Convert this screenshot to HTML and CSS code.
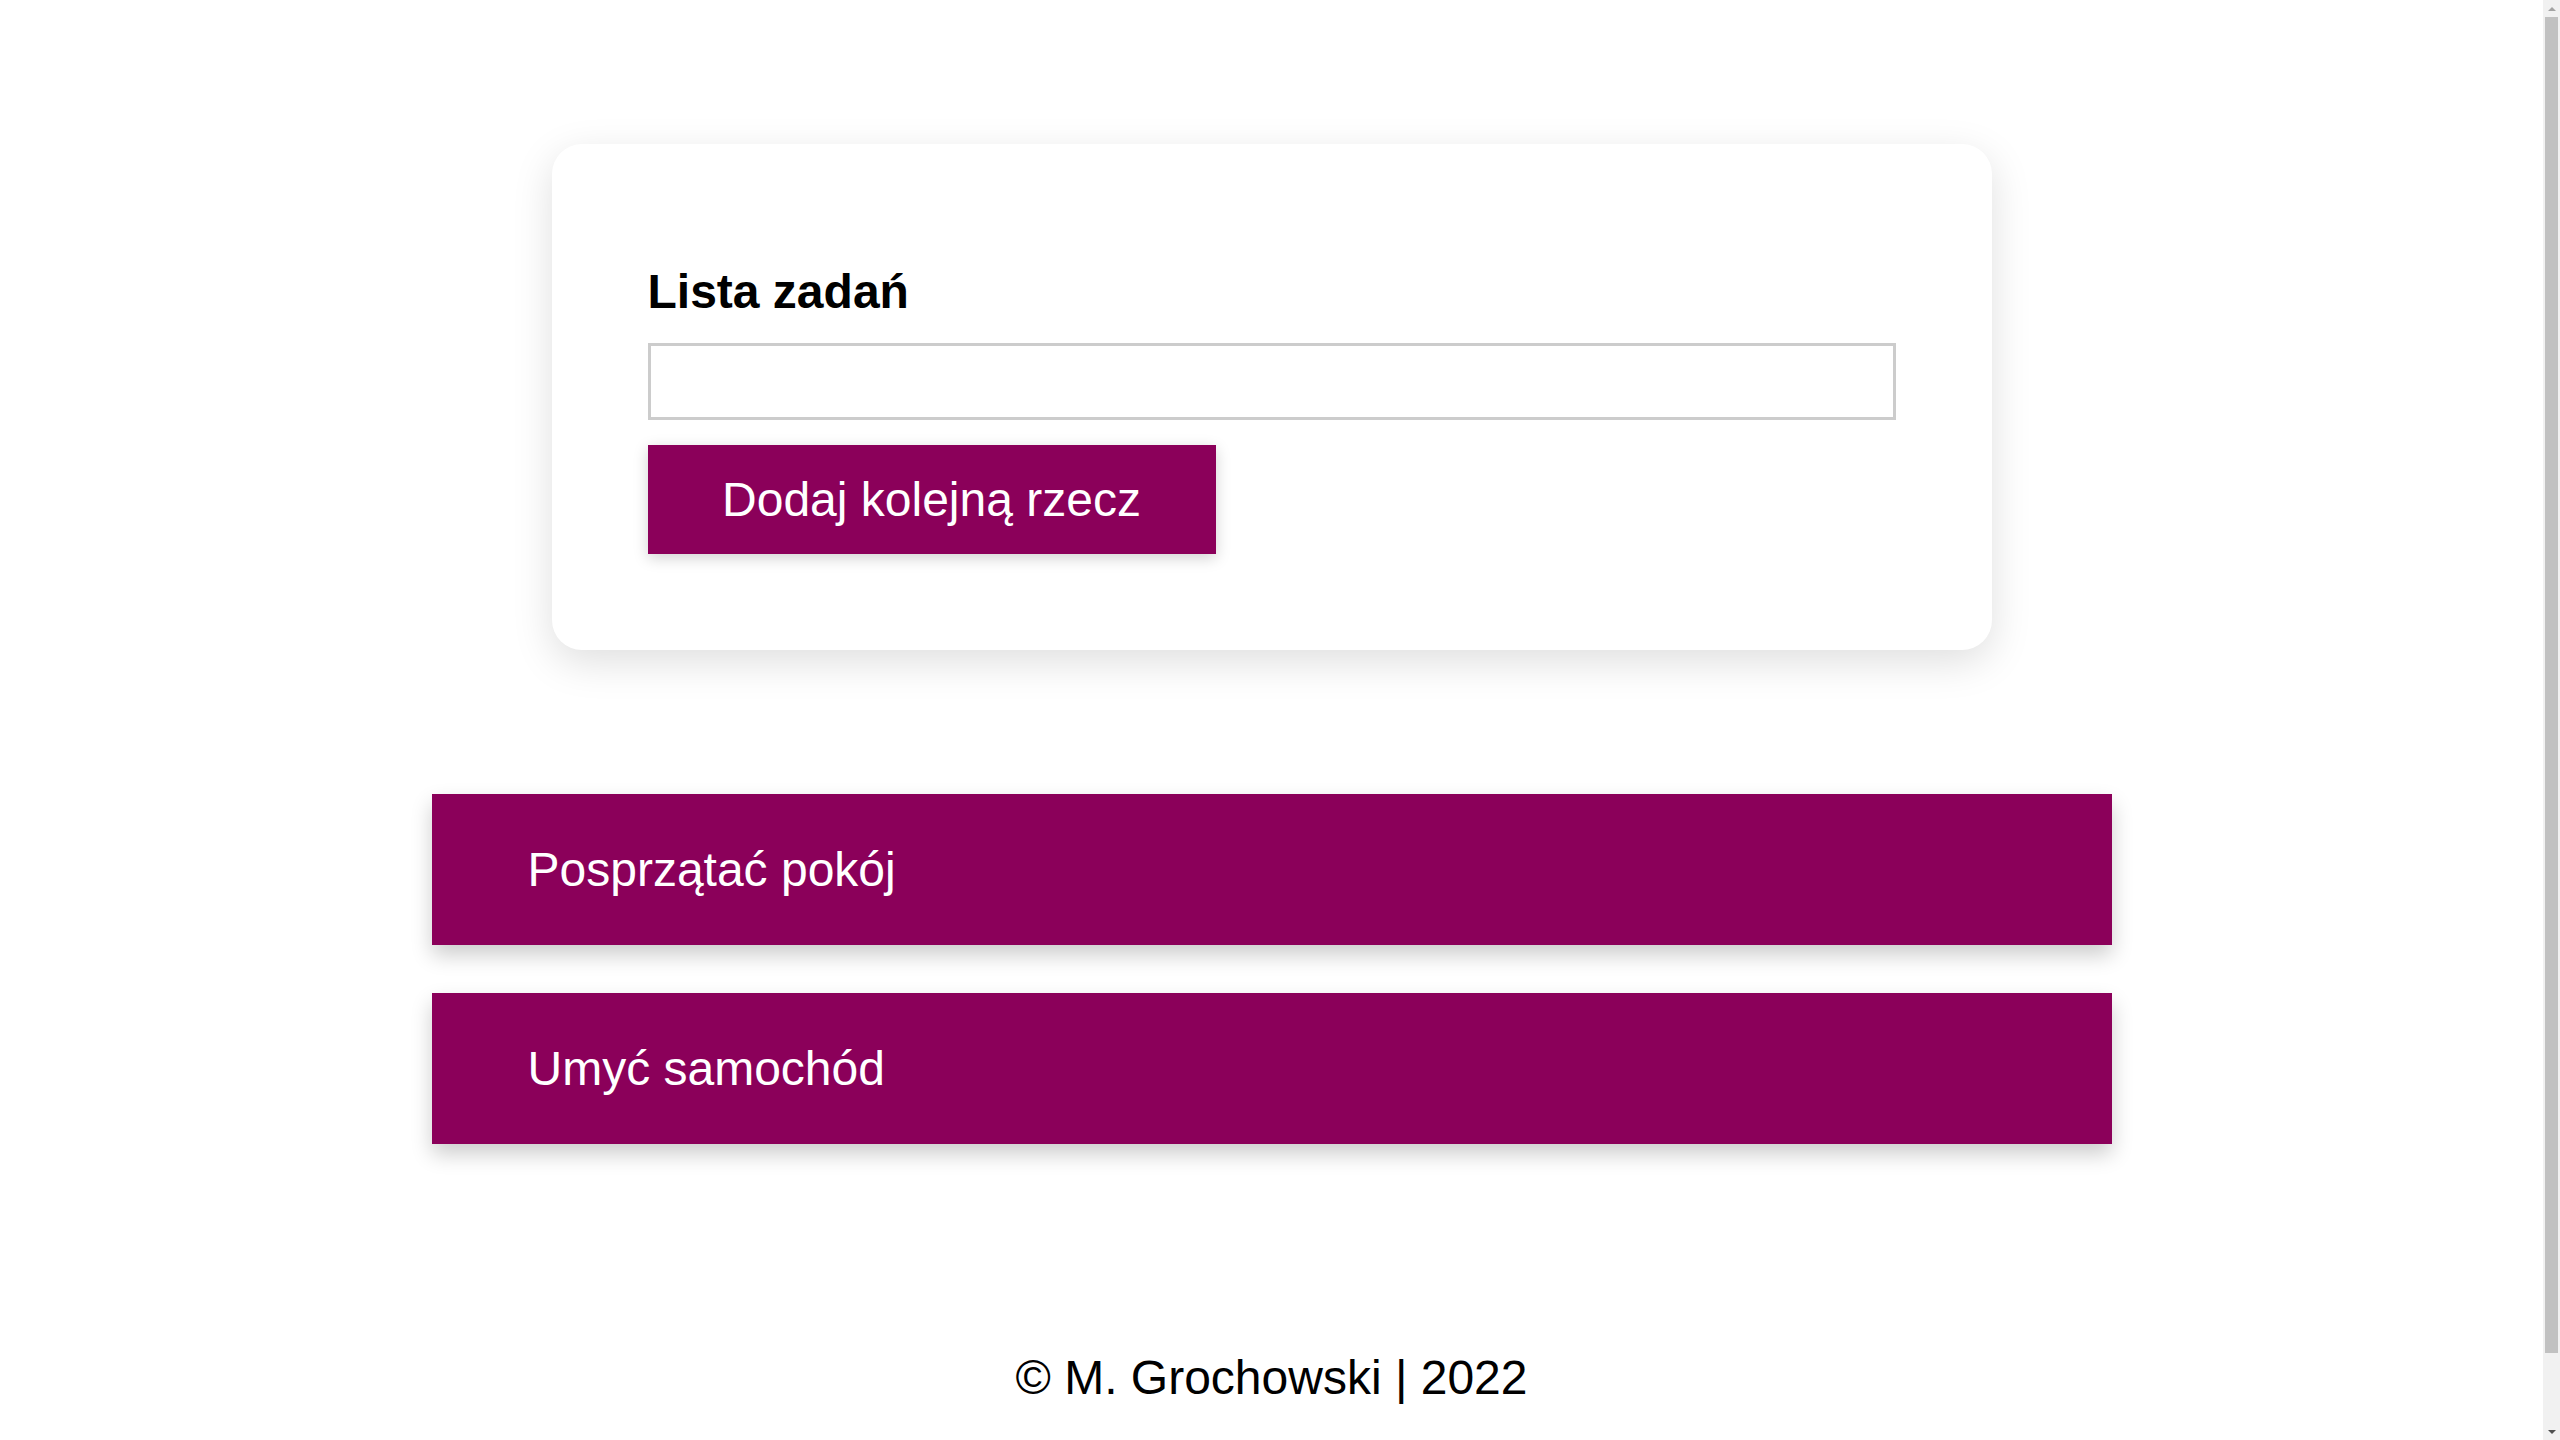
FILE: index.html
```html
<!DOCTYPE html>
<html lang="pl">
<head>
<meta charset="utf-8">
<title>Lista zadań</title>
<link rel="stylesheet" href="styles.css">
</head>
<body>
<div class="viewport">
  <main class="page">
    <section class="card">
      <h1 class="card-title">Lista zadań</h1>
      <input class="task-input" type="text">
      <button class="add-btn" type="button">Dodaj kolejną rzecz</button>
    </section>
    <ul class="tasks">
      <li class="task">Posprzątać pokój</li>
      <li class="task">Umyć samochód</li>
    </ul>
  </main>
  <footer class="footer">© M. Grochowski | 2022</footer>
</div>
<div class="scrollbar" aria-hidden="true">
  <span class="sb-arrow sb-up"></span>
  <span class="sb-track"><span class="sb-thumb"></span></span>
  <span class="sb-arrow sb-down"></span>
</div>
</body>
</html>
```
FILE: styles.css
```css
html, body {
  margin: 0;
  padding: 0;
  background: #ffffff;
  font-family: "Liberation Sans", Arial, sans-serif;
  color: #000;
}

.viewport {
  width: calc(100% - 17px);
}

.page {
  display: flex;
  flex-direction: column;
  align-items: center;
  padding-top: 144px;
}

.card {
  box-sizing: border-box;
  width: 1440px;
  padding: 96px;
  background: #fff;
  border-radius: 30px;
  box-shadow: 0 12px 40px rgba(0, 0, 0, 0.13);
  display: flex;
  flex-direction: column;
  align-items: flex-start;
}

.card-title {
  font-size: 48px;
  font-weight: bold;
  line-height: 55px;
  margin: 24px 0 24px;
}

.task-input {
  box-sizing: border-box;
  width: 100%;
  height: 77px;
  border: 3px solid #cccccc;
  border-radius: 0;
  padding: 0 16px;
  font-size: 32px;
  font-family: inherit;
  margin: 0;
  outline: none;
}

.add-btn {
  margin-top: 25px;
  box-sizing: border-box;
  width: 568px;
  height: 109px;
  border: none;
  background: #8b005a;
  color: #fff;
  font-family: "Liberation Sans", Arial, sans-serif;
  font-size: 48px;
  box-shadow: 0 4px 14px rgba(0, 0, 0, 0.18);
  cursor: pointer;
}

.tasks {
  list-style: none;
  margin: 144px 0 0;
  padding: 0;
  display: flex;
  flex-direction: column;
  gap: 48px;
}

.task {
  box-sizing: border-box;
  width: 1680px;
  padding: 48px 96px;
  background: #8b005a;
  color: #fff;
  font-size: 48px;
  line-height: 55px;
  box-shadow: 0 10px 20px rgba(0, 0, 0, 0.2);
}

.footer {
  text-align: center;
  font-size: 48px;
  line-height: 55px;
  margin-top: 206px;
  padding-bottom: 110px;
}

/* fake browser scrollbar */
.scrollbar {
  position: fixed;
  top: 0;
  right: 0;
  width: 17px;
  height: 100vh;
  background: #f1f1f1;
  display: flex;
  flex-direction: column;
  align-items: center;
}

.sb-arrow {
  flex: 0 0 17px;
  width: 17px;
  display: flex;
  align-items: center;
  justify-content: center;
}

.sb-up::before {
  content: "";
  border-left: 4px solid transparent;
  border-right: 4px solid transparent;
  border-bottom: 4px solid #a3a3a3;
}

.sb-down::before {
  content: "";
  border-left: 4px solid transparent;
  border-right: 4px solid transparent;
  border-top: 4px solid #505050;
}

.sb-track {
  flex: 1;
  width: 100%;
  display: flex;
  flex-direction: column;
  align-items: center;
}

.sb-thumb {
  width: 13px;
  height: 1336px;
  background: #c1c1c1;
}
```
